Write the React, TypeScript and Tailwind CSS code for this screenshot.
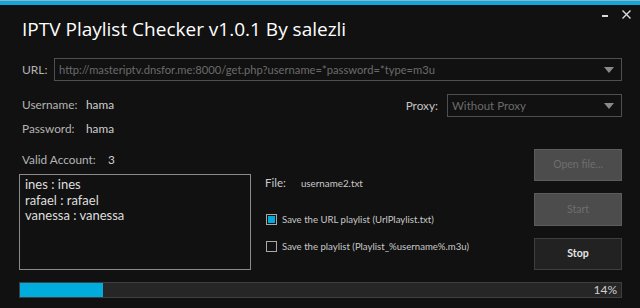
import React from 'react'

const titleFont = { fontFamily: '"Open Sans", "Noto Sans", sans-serif' }
const uiFont = { fontFamily: 'Lato, "Open Sans", sans-serif' }

function Triangle() {
  return (
    <svg width="10" height="6" viewBox="0 0 10 6" className="shrink-0">
      <path d="M0 0 H10 L5 6 Z" fill="#8a8a8a" />
    </svg>
  )
}

function Combo({ value, className, size }: { value: string; className?: string; size: string }) {
  return (
    <div className={`flex items-center justify-between border border-[#4f4f4f] pl-[4px] pr-[7px] ${className ?? ''}`}>
      <span className={`${size} text-[#6b6b6b] leading-none whitespace-nowrap`}>{value}</span>
      <Triangle />
    </div>
  )
}

function Checkbox({ checked, label }: { checked: boolean; label: string }) {
  return (
    <div className="flex items-center gap-[5px]">
      <div className="w-[11px] h-[11px] border border-[#a8a8a8] p-[1px]">
        {checked && <div className="w-full h-full bg-[#00abdc]" />}
      </div>
      <span className="text-[9.6px] text-[#c8c8c8] leading-none whitespace-nowrap">{label}</span>
    </div>
  )
}

export default function App() {
  const accounts = ['ines : ines', 'rafael : rafael', 'vanessa : vanessa']
  const progress = 14

  return (
    <div className="w-[640px] h-[308px] bg-[#111111] overflow-hidden flex flex-col" style={uiFont}>
      {/* accent strip */}
      <div className="h-[5px] bg-[#13a6d8] border-t border-[#8fb4c4] shrink-0" />

      {/* Title */}
      <div className="flex justify-between pl-[22px] pr-[9px] h-[44px]">
        <h1 className="text-[19px] text-white leading-none mt-[15px]" style={titleFont}>
          IPTV Playlist Checker v1.0.1 By salezli
        </h1>
        <div className="flex items-start gap-[14px]">
          <div className="w-[6px] h-[2px] bg-[#d8d8d8] mt-[10px]" />
          <svg width="9" height="9" viewBox="0 0 9 9" className="mt-[5px]">
            <path d="M0.5 0.5 L8.5 8.5 M8.5 0.5 L0.5 8.5" stroke="#dcdcdc" strokeWidth="1.4" />
          </svg>
        </div>
      </div>

      <div className="flex flex-col pl-[19px] pr-[18px]">
        {/* URL */}
        <div className="flex items-center mt-[9px] h-[23px]">
          <span className="w-[35px] pl-[3px] text-[12px] text-[#b4b4b4]">URL:</span>
          <Combo
            value="http://masteriptv.dnsfor.me:8000/get.php?username=*password=*type=m3u"
            size="text-[11.2px]"
            className="flex-1 h-[23px]"
          />
        </div>

        {/* Credentials + proxy */}
        <div className="flex justify-between mt-[13px]">
          <div className="flex flex-col pl-[3px] text-[11.8px] text-[#b4b4b4]">
            <div className="flex items-center h-[20px] mt-[1px]">
              <span className="w-[64px]">Username:</span>
              <span className="text-[#cfcfcf]">hama</span>
            </div>
            <div className="flex items-center h-[20px] mt-[4px]">
              <span className="w-[64px]">Password:</span>
              <span className="text-[#cfcfcf]">hama</span>
            </div>
          </div>
          <div className="flex items-center h-[23px] gap-[9px]">
            <span className="text-[11.8px] text-[#c4c4c4]">Proxy:</span>
            <Combo value="Without Proxy" size="text-[11.5px]" className="w-[175px] h-[23px]" />
          </div>
        </div>

        {/* Lower section */}
        <div className="flex mt-[10px]">
          <div className="flex flex-col w-[232px]">
            <div className="flex items-center h-[18px] mt-[2px] pl-[3px] text-[11.8px] text-[#b4b4b4]">
              <span className="w-[86px]">Valid Account:</span>
              <span className="text-[#cfcfcf]">3</span>
            </div>
            <div className="mt-[5px] h-[96px] border border-[#8a8a8a] px-[5px] pt-[2px] flex flex-col">
              {accounts.map(a => (
                <div key={a} className="h-[15.5px] flex items-center text-[13px] text-[#dedede] leading-none">
                  {a}
                </div>
              ))}
            </div>
          </div>

          <div className="flex flex-col flex-1 pl-[14px] pt-[27px]">
            <div className="flex items-center h-[14px] gap-[15px]">
              <span className="text-[11.5px] text-[#c8c8c8]">File:</span>
              <span className="text-[9.8px] text-[#c8c8c8]">username2.txt</span>
            </div>
            <div className="mt-[24px] pl-[1px]">
              <Checkbox checked label="Save the URL playlist (UrlPlaylist.txt)" />
            </div>
            <div className="mt-[16px] pl-[1px]">
              <Checkbox checked={false} label="Save the playlist (Playlist_%username%.m3u)" />
            </div>
          </div>

          <div className="flex flex-col w-[88px] gap-[12px]">
            <button className="h-[32px] bg-[#4c4c4c] border border-[#5c5c5c] text-[10.5px] text-[#6e6e6e]">Open file...</button>
            <button className="h-[33px] bg-[#4c4c4c] border border-[#5c5c5c] text-[10.5px] text-[#6e6e6e]">Start</button>
            <button className="h-[32px] bg-[#222222] border border-[#3e3e3e] text-[10.5px] font-bold text-[#e6e6e6]">Stop</button>
          </div>
        </div>

        {/* Progress */}
        <div className="mt-[12px] h-[16px] bg-[#262626] border border-[#3f3f3f] flex items-center relative">
          <div className="h-full bg-[#00acdb]" style={{ width: `${progress * 0.985}%` }} />
          <span className="absolute right-[4px] text-[12px] text-[#cfcfcf] leading-none">{progress}%</span>
        </div>
      </div>
    </div>
  )
}
